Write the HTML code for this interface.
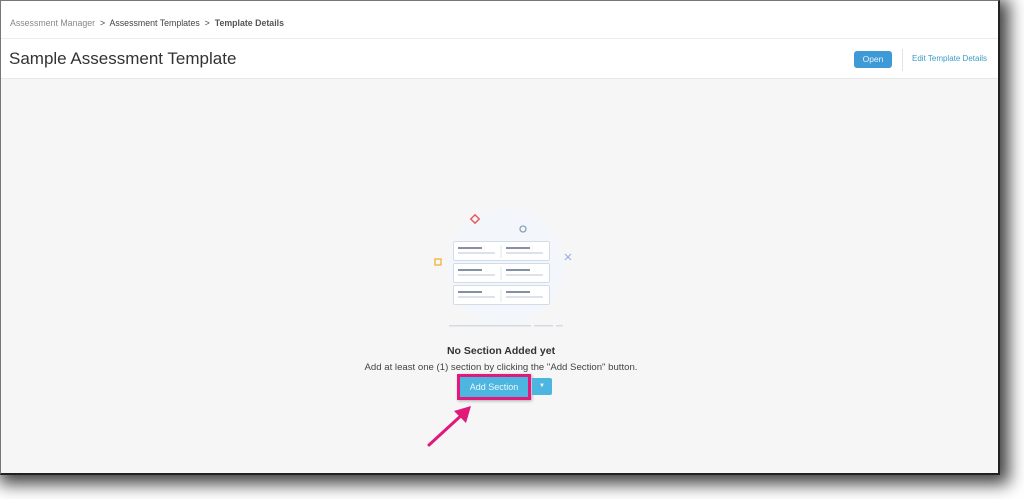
<!DOCTYPE html>
<html><head><style>
*{margin:0;padding:0;box-sizing:border-box}
body{width:1024px;height:499px;background:#fff;position:relative;overflow:hidden;font-family:"Liberation Sans",sans-serif}
#frame{position:absolute;left:0;top:0;width:1000px;height:475px;border:1px solid #777;border-right:2px solid #222;border-bottom:2px solid #222;background:#f6f6f6;box-shadow:4px 4px 16px 5px rgba(0,0,0,.75)}
#bc{position:absolute;left:0;top:0;width:100%;height:38px;background:#fff;border-bottom:1px solid #ececec;font-size:8.8px;padding:17px 0 0 9px;color:#444}
#bc .g{color:#888}
#bc b{color:#555}
#hd{position:absolute;left:0;top:38px;width:100%;height:40px;background:#fff;border-bottom:1px solid #e8e8e8}
#hd h1{font-weight:normal;font-size:17px;color:#333;position:absolute;left:8px;top:10px}
.open{position:absolute;left:853px;top:12px;width:38px;height:17px;background:#3d9ad6;border-radius:3px;color:#e8f2fb;font-size:8.5px;text-align:center;line-height:17px}
.sep{position:absolute;left:901px;top:10px;width:1px;height:22px;background:#e3e3e3}
.edit{position:absolute;left:911px;top:15px;font-size:8px;color:#3b9cc7}
.c{position:absolute;left:0;width:1000px;text-align:center}
</style></head><body>
<div id="frame">
<div id="bc"><span class="g">Assessment Manager</span> &nbsp;&gt;&nbsp; Assessment Templates &nbsp;&gt;&nbsp; <b>Template Details</b></div>
<div id="hd"><h1>Sample Assessment Template</h1><div class="open">Open</div><div class="sep"></div><div class="edit">Edit Template Details</div></div>
<svg style="position:absolute;left:420px;top:205px" width="170" height="130" viewBox="0 0 170 130">
<circle cx="85" cy="60" r="58" fill="#f3f6fa"/>
<rect x="51" y="10" width="6" height="6" transform="rotate(45 54 13)" fill="none" stroke="#e46060" stroke-width="1.5"/>
<circle cx="102" cy="23" r="3" fill="none" stroke="#8aa2bf" stroke-width="1.3"/>
<rect x="14" y="53" width="6" height="6" fill="none" stroke="#f0b23a" stroke-width="1.3"/>
<path d="M144 48l6 6M150 48l-6 6" stroke="#9cb2e6" stroke-width="1.2"/>
<g fill="#fff" stroke="#d3dcea">
<rect x="32.5" y="35.5" width="96" height="19" rx="1.5"/><rect x="32.5" y="57.5" width="96" height="19" rx="1.5"/><rect x="32.5" y="79.5" width="96" height="19" rx="1.5"/></g>
<g stroke="#e2e7ee"><path d="M80 39v13M80 61v13M80 83v13"/></g>
<g fill="#8590a6"><rect x="37" y="41" width="24" height="2"/><rect x="85" y="41" width="24" height="2"/><rect x="37" y="63" width="24" height="2"/><rect x="85" y="63" width="24" height="2"/><rect x="37" y="85" width="24" height="2"/><rect x="85" y="85" width="24" height="2"/></g>
<g fill="#dde2ea"><rect x="37" y="46" width="37" height="2"/><rect x="85" y="46" width="37" height="2"/><rect x="37" y="68" width="37" height="2"/><rect x="85" y="68" width="37" height="2"/><rect x="37" y="90" width="37" height="2"/><rect x="85" y="90" width="37" height="2"/></g>
<g fill="#d4dbe5"><rect x="28" y="119" width="82" height="1.5"/><rect x="113" y="119" width="19" height="1.5"/><rect x="135" y="119" width="7" height="1.5"/></g>
</svg>
<div class="c" style="top:344px;font-size:10.5px;font-weight:bold;color:#333">No Section Added yet</div>
<div class="c" style="top:361px;font-size:9.6px;color:#444">Add at least one (1) section by clicking the "Add Section" button.</div>
<div style="position:absolute;left:456px;top:373px;width:74px;height:26px;border:3px solid #e0197a;background:#4cb5e0;color:#eef8fd;font-size:9px;text-align:center;line-height:20px;box-shadow:1px 1px 3px rgba(0,0,0,.3)">Add Section</div>
<div style="position:absolute;left:531px;top:377px;width:20px;height:17px;background:#4cb5e0;border-radius:0 2px 2px 0;color:#fff;font-size:6px;text-align:center;line-height:17px">▼</div>
<svg style="position:absolute;left:420px;top:400px" width="60" height="50"><path d="M8 44L44 11" stroke="#e0197a" stroke-width="3" stroke-linecap="round"/><path d="M50 5L33 10L45 22Z" fill="#e0197a"/></svg>
</div>
</body></html>
